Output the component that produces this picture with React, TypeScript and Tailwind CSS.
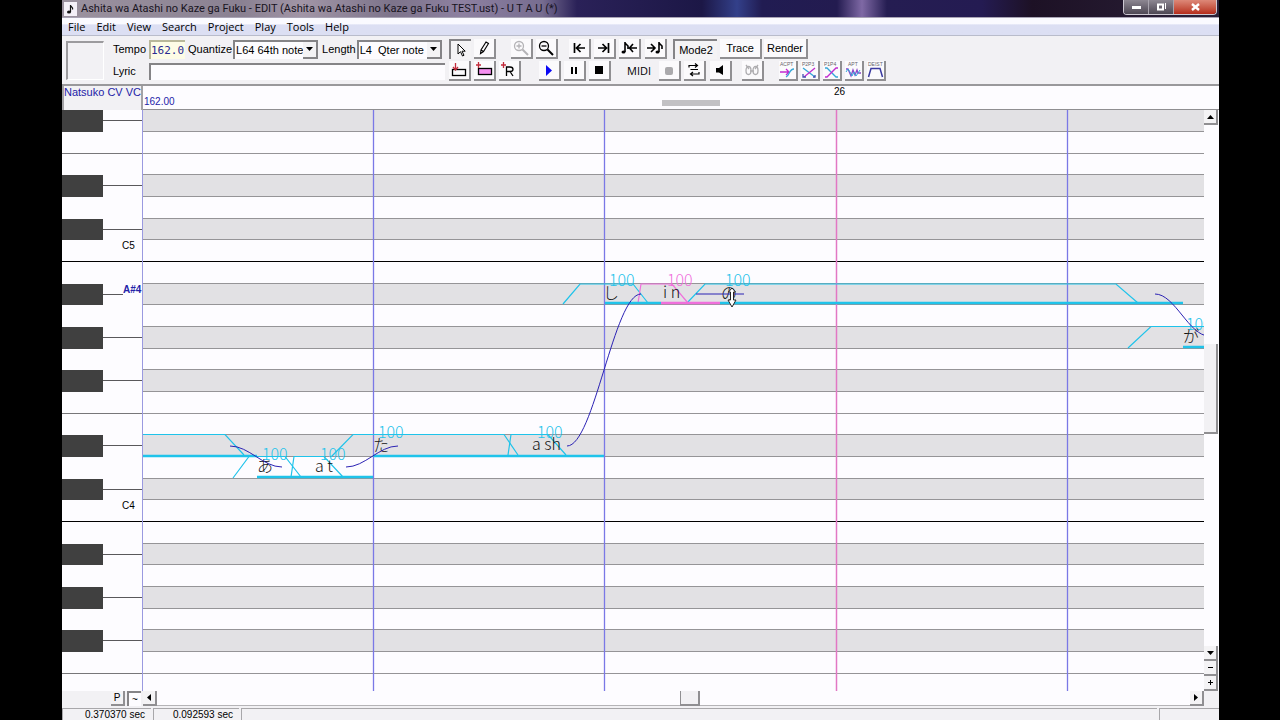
import React from 'react';

const LANES = Array.from({ length: 27 }, (_, i) => i);
const BLACK_KEYS = [0, 3, 5, 8, 10, 12, 15, 17, 20, 22, 24];
const FULL_KEY_LINES = [1, 6, 13, 18, 25];
const OCTAVE_LINES = [6, 18];
const KEY_LABELS: Record<number, string> = { 6: 'C5', 8: 'A#4', 18: 'C4' };

const CYAN = '#1fc3ea';
const PINK = '#f06fdc';

// lanes average 21 2/3 px, so every third one is a pixel shorter
const laneHeight = (i: number) => (i === 26 ? 'h-[18px]' : i % 3 === 2 ? 'h-[21px]' : 'h-[22px]');

interface ToolButtonProps {
  label: string;
  pressed?: boolean;
  disabled?: boolean;
  width?: string;
  className?: string;
  children: React.ReactNode;
}

const ToolButton: React.FC<ToolButtonProps> = ({ label, pressed, disabled, width = 'w-[22px]', className = '', children }) => (
  <button
    type="button"
    aria-label={label}
    aria-pressed={pressed}
    disabled={disabled}
    className={`flex h-5 shrink-0 items-center justify-center ${width} ${pressed ? 'border-t-2 border-l-2 border-[#858487] bg-[#f4f3f5]' : 'border-r-2 border-b-2 border-[#908f92] bg-[#fbfafc]'} ${className}`}
  >
    {children}
  </button>
);

const Icon: React.FC<{ children: React.ReactNode; color?: string; w?: number }> = ({ children, color = '#000', w = 18 }) => (
  <svg width={w} height="18" viewBox={`0 0 ${w} 18`} fill="none" stroke={color} strokeWidth="1.3" className="shrink-0">
    {children}
  </svg>
);

const Combo: React.FC<{ id: string; label: string; value: string }> = ({ id, label, value }) => (
  <>
    <label htmlFor={id} className="shrink-0">{label}</label>
    <div className="relative mr-1 ml-px h-[19px] w-[85px] shrink-0">
      <select id={id} className="block h-full w-full appearance-none border-t-2 border-l-2 border-[#858487] bg-[#fdfcff] pl-px text-[11px] leading-4">
        <option>{value}</option>
      </select>
      <span className="pointer-events-none absolute top-[2px] right-0 flex h-[17px] w-[15px] items-center justify-center border-r-2 border-b-2 border-[#858487] bg-[#f4f3f5]">
        <svg width="7" height="4"><path d="M0 0H7L3.500 4Z" /></svg>
      </span>
    </div>
  </>
);

const MenuBar = () => (
  <nav className="flex h-[18px] shrink-0 items-center gap-[11px] border-b border-[#b9bccb] bg-linear-to-b from-[#fafaff] from-35% to-[#dcdff3] to-40% pl-[6px] font-['Open_Sans',sans-serif] text-[11px] leading-4">
    {['File', 'Edit', 'View', 'Search', 'Project', 'Play', 'Tools', 'Help'].map((m) => (
      <button key={m} type="button">{m}</button>
    ))}
  </nav>
);

const TitleBar = () => (
  <header className="relative flex h-[18px] shrink-0 items-center overflow-hidden border-b border-[#a9a4b5] bg-[linear-gradient(90deg,#9b929f_0,#8a8192_180px,#a195a6_240px,#7d748b_330px,#8d80a0_400px,#776d90_480px,#2a2158_515px,#1c1746_640px,#33408a_675px,#211c52_700px,#231b50_775px,#7f69a5_800px,#251d52_825px,#241b52_920px,#1d1125_970px,#2a2038_100%)] pl-[2px]">
    <svg width="13" height="14" viewBox="0 0 13 14" className="shrink-0">
      <rect width="13" height="14" fill="#f4f0f8" />
      <path d="M6.5 3V10M6.500 3.500C7 5.500 9.500 5 8.500 7.500" fill="none" stroke="#111" strokeWidth="1.2" />
      <ellipse cx="5" cy="10" rx="2" ry="1.500" fill="#111" />
    </svg>
    <h1 className="ml-1 font-['Roboto',sans-serif] text-[11px] leading-4 whitespace-nowrap text-[#17131d]">
      Ashita wa Atashi no Kaze ga Fuku - EDIT (Ashita wa Atashi no Kaze ga Fuku TEST.ust) - U T A U (*)
    </h1>
    <div className="absolute top-0 right-[2px] flex h-[15px] overflow-hidden rounded-b border border-t-0 border-[#cdc8d2]">
      <button type="button" aria-label="Minimize" className="flex w-[25px] items-center justify-center border-r border-[#a8a3ad] bg-linear-to-b from-[#8d8792] to-[#4e4854]">
        <svg width="9" height="3"><rect width="9" height="3" fill="#fff" /></svg>
      </button>
      <button type="button" aria-label="Restore" className="flex w-[25px] items-center justify-center border-r border-[#a8a3ad] bg-linear-to-b from-[#8d8792] to-[#4e4854]">
        <svg width="9" height="8" fill="none" stroke="#fff"><path d="M1 1.500H6V6.500H1Z" strokeWidth="2" /><path d="M8.500 0V6" /></svg>
      </button>
      <button type="button" aria-label="Close" className="flex w-[42px] items-center justify-center bg-linear-to-b from-[#dd8878] to-[#b52a19]">
        <svg width="9" height="8" stroke="#fff" strokeWidth="2.400"><path d="M1 1L8 7M8 1L1 7" /></svg>
      </button>
    </div>
  </header>
);

const Toolbar = () => (
  <div className="flex h-12 shrink-0 bg-[#f2f1f4] pl-1">
    <div className="mt-[5px] h-[39px] w-[38px] shrink-0 border-t-2 border-l-2 border-[#9c9b9e] border-r border-r-white border-b border-b-white" />

    <div className="mt-[3px] ml-[9px] flex w-[332px] shrink-0 flex-col gap-[2px]">
      <div className="flex h-5 items-center">
        <label htmlFor="tempo" className="w-9 shrink-0">Tempo</label>
        <input id="tempo" defaultValue="162.0" className="mr-[3px] h-[19px] w-9 shrink-0 border-t-2 border-l-2 border-[#b8b79a] bg-[#fdfce6] font-['DejaVu_Sans_Mono',monospace] text-[11px] text-[#2b2b90]" />
        <Combo id="quantize" label="Quantize" value="L64 64th note" />
        <Combo id="length" label="Length" value={'L4\u00a0\u00a0Qter note'} />
      </div>
      <div className="flex h-5 items-center">
        <label htmlFor="lyric" className="w-9 shrink-0">Lyric</label>
        <input id="lyric" className="h-[17px] min-w-0 flex-1 border-t-2 border-l-2 border-[#858487] bg-[#fdfcff]" />
      </div>
    </div>

    <div className="mt-[3px] ml-1 flex flex-col gap-[2px]">
      <div className="flex items-center gap-[3px]">
        <ToolButton label="Select" pressed>
          <Icon><path d="M6 3V13L8.500 10.700L10.500 15L12 14.300L10 10.200H13.200Z" strokeWidth="1" fill="#fff" /></Icon>
        </ToolButton>
        <ToolButton label="Pencil">
          <Icon><path d="M5.500 14.500L6 11L11 3L13.500 4.500L8.500 12.500ZM6 11L8.500 12.500" strokeWidth="1.100" /></Icon>
        </ToolButton>
        <ToolButton label="Zoom in" disabled className="ml-3">
          <Icon color="#b4b3b6"><circle cx="7" cy="7" r="4.500" /><path d="M4.500 7H9.500M7 4.500V9.500" /><path d="M10.500 10.500L16 16" strokeWidth="2" /></Icon>
        </ToolButton>
        <ToolButton label="Zoom out">
          <Icon><circle cx="7" cy="7" r="4.500" /><path d="M4.500 7H9.500" /><path d="M10.500 10.500L16 16" strokeWidth="2" /></Icon>
        </ToolButton>
        <ToolButton label="Go to start" className="ml-2">
          <Icon><path d="M4.500 4V14M15 9H7M10.500 5L6.500 9L10.500 13" strokeWidth="1.700" /></Icon>
        </ToolButton>
        <ToolButton label="Go to end">
          <Icon><path d="M13.500 4V14M3 9H11M7.500 5L11.500 9L7.500 13" strokeWidth="1.700" /></Icon>
        </ToolButton>
        <ToolButton label="Previous note">
          <Icon><path d="M5 3V13M5 4L8 7V10M17 9H10M13 5L9.500 9L13 13" strokeWidth="1.600" /><ellipse cx="3.500" cy="13" rx="2" ry="1.500" fill="#000" stroke="none" /></Icon>
        </ToolButton>
        <ToolButton label="Next note" className="ml-px">
          <Icon><path d="M13 3V13M13 4L16 7V10M1 9H8M5 5L9 9L5 13" strokeWidth="1.600" /><ellipse cx="11.500" cy="13" rx="2" ry="1.500" fill="#000" stroke="none" /></Icon>
        </ToolButton>
        <ToolButton label="Mode2" pressed width="w-[44px]" className="ml-[3px]">Mode2</ToolButton>
        <ToolButton label="Trace" width="w-[42px]">Trace</ToolButton>
        <ToolButton label="Render" width="w-[44px]" className="-ml-px">Render</ToolButton>
      </div>

      <div className="flex items-center gap-[3px]">
        <ToolButton label="Insert note">
          <Icon><rect x="2.500" y="8.500" width="13" height="6" /><path d="M5.500 2V9M3 6L5.500 9L8 6" stroke="#c22b3b" /></Icon>
        </ToolButton>
        <ToolButton label="Add note">
          <Icon><rect x="3.500" y="7.500" width="13" height="6" fill="#f58ff0" /><path d="M3.500 1V7M1 4H6" stroke="#c22b3b" /></Icon>
        </ToolButton>
        <ToolButton label="Add rest">
          <Icon><path d="M3.500 1V7M1 4H6" stroke="#c22b3b" /><path d="M6.500 15V6H10C14 6 14 10.500 10 10.500H6.500M10 10.500L13 15" /></Icon>
        </ToolButton>
        <ToolButton label="Play" className="ml-[15px]">
          <Icon><path d="M6 4L12 9.500L6 15Z" fill="#0a08f5" stroke="none" /></Icon>
        </ToolButton>
        <ToolButton label="Pause">
          <Icon><path d="M7 6V13M11 6V13" strokeWidth="2" /></Icon>
        </ToolButton>
        <ToolButton label="Stop">
          <Icon><rect x="5" y="5" width="8" height="8" fill="#000" stroke="none" /></Icon>
        </ToolButton>
        <span className="w-[42px] pl-2 text-center font-['Open_Sans',sans-serif]">MIDI</span>
        <ToolButton label="Record" disabled>
          <Icon><rect x="5" y="6" width="8" height="8" rx="2" fill="#aaa9ac" stroke="none" /></Icon>
        </ToolButton>
        <ToolButton label="Loop">
          <Icon><path d="M4 6.500V4.500H12M10 2.500L12.500 4.500L10 6.500M5.500 8.500H13M14 11V13H6M8 11L5.500 13L8 15" strokeWidth="1.200" /></Icon>
        </ToolButton>
        <ToolButton label="Sound" className="ml-px">
          <Icon><path d="M5 7H8L12 4V14L8 11.500H5Z" fill="#000" stroke="none" /></Icon>
        </ToolButton>
        <ToolButton label="Link" disabled className="ml-[7px]">
          <Icon color="#aeadb0"><ellipse cx="5.500" cy="9.500" rx="2.500" ry="4" /><ellipse cx="12.500" cy="9.500" rx="2.500" ry="4" /><path d="M3 4L6 8M15 4L12 8M7 10H11" /></Icon>
        </ToolButton>
        <ToolButton label="ACPT" width="w-[19px]" className="ml-3">
          <Icon w={17}><text x="1" y="5" fontSize="5" fill="#66656b" stroke="none">ACPT</text><path d="M1 11H10M7 8L10 11L7 14" stroke="#c12bd0" /><path d="M7 16C11 14 10 8 15 8" stroke="#35a6d8" /></Icon>
        </ToolButton>
        <ToolButton label="P2P3" width="w-[19px]">
          <Icon w={17}><text x="1" y="5" fontSize="5" fill="#66656b" stroke="none">P2P3</text><path d="M2 7L14 16" stroke="#35a6d8" /><path d="M14 7L3 16" stroke="#c12bd0" /><path d="M2 13V16H5M12 16H14V14" stroke="#4450b0" /></Icon>
        </ToolButton>
        <ToolButton label="P1P4" width="w-[19px]">
          <Icon w={17}><text x="1" y="5" fontSize="5" fill="#66656b" stroke="none">P1P4</text><path d="M2 7H4L13 16H15" stroke="#35a6d8" /><path d="M15 7H13L4 16H2" stroke="#c12bd0" /></Icon>
        </ToolButton>
        <ToolButton label="APT" width="w-[19px]">
          <Icon w={17}><text x="3" y="5" fontSize="5" fill="#66656b" stroke="none">APT</text><path d="M1 8H3L6 15L8 9L10 14L12 9L13 12H16" stroke="#8a46c8" /><path d="M1 11L3 8L5 11L7 15L9 11L11 15L15 9" stroke="#35a6d8" strokeWidth="1" /></Icon>
        </ToolButton>
        <ToolButton label="Region" width="w-[19px]">
          <Icon w={17}><text x="1" y="5" fontSize="5" fill="#66656b" stroke="none">DEIST</text><path d="M1.500 16L4 7.500H13L15.500 16" stroke="#3a3aa0" strokeWidth="1.500" /></Icon>
        </ToolButton>
      </div>
    </div>
  </div>
);

const Ruler = () => (
  <div className="flex h-[26px] shrink-0 border-t-2 border-[#99989b] bg-[#fdfcff]">
    <div className="w-[81px] shrink-0 overflow-hidden border-r-2 border-l-2 border-[#a3a2a5] bg-[#f2f1f4] text-[11px] leading-3 whitespace-nowrap text-[#2423a8]">Natsuko CV VC</div>
    <div className="relative flex-1 border-b border-[#8f8e91] leading-3">
      <span className="absolute bottom-px left-px text-[10px] text-[#2423a8]">162.00</span>
      <span className="absolute top-0 left-[691px] text-[10px]">26</span>
      <span className="absolute top-[14px] left-[519px] h-[6px] w-[58px] bg-[#c2c1c4]" />
    </div>
  </div>
);

const Keyboard = () => (
  <div className="w-20 shrink-0 bg-[#fdfcff]">
    {LANES.map((i) => (
      <div key={i} className={`flex ${laneHeight(i)} ${FULL_KEY_LINES.includes(i) ? (OCTAVE_LINES.includes(i) ? 'border-b border-black' : 'border-b border-[#777679]') : ''}`}>
        {BLACK_KEYS.includes(i) && (
          <>
            <div className="w-[41px] bg-[#404040]" />
            <div className={`h-[11px] border-b border-[#59585b] ${KEY_LABELS[i] ? 'w-5' : 'flex-1'}`} />
          </>
        )}
        {KEY_LABELS[i] && (
          <span className={`text-[10px] leading-3 ${i === 8 ? 'font-bold text-[#2423a8]' : 'ml-auto w-5'}`}>{KEY_LABELS[i]}</span>
        )}
      </div>
    ))}
  </div>
);

const BEATS = [230, 461, 924];

const BARS = [
  { x1: 0, x2: 114, y: 346, color: CYAN },
  { x1: 114, x2: 230, y: 367, color: CYAN },
  { x1: 230, x2: 461, y: 346, color: CYAN },
  { x1: 462, x2: 518, y: 193, color: CYAN },
  { x1: 518, x2: 577, y: 193, color: PINK },
  { x1: 577, x2: 1040, y: 193, color: CYAN },
  { x1: 1040, x2: 1600, y: 237, color: CYAN },
];

const ENVELOPES = [
  { d: 'M0 324.500H82L101 345', color: CYAN },
  { d: 'M90 368L106 346.500H142L158 367', color: CYAN },
  { d: 'M148 367L151 346.500H181L200 367', color: CYAN },
  { d: 'M188 347L210 324.500H361L375 345', color: CYAN },
  { d: 'M365 345L368 324.500H405L423 345', color: CYAN },
  { d: 'M420 194L437 174H490L505 193', color: CYAN },
  { d: 'M544 193L562 174H973L995 193', color: CYAN },
  { d: 'M495 193L498 174H529L545 193', color: PINK },
  { d: 'M985 238L1008 216.500H1600', color: CYAN },
];

const PITCHES = [
  'M87 336C106 336 120 357 139 357',
  'M203 357C222 357 236 336 255 336',
  'M424 336C451 336 471 184 498 184',
  'M553 184H601',
  'M1012 184C1032 184 1046 226 1066 226',
];

const INTENSITIES = [
  { x: 119, y: 350 }, { x: 177, y: 350 }, { x: 235, y: 328 }, { x: 394, y: 328 },
  { x: 466, y: 176 }, { x: 524, y: 176, color: PINK }, { x: 582, y: 176 }, { x: 1043, y: 220 },
];

const LYRICS = [
  { x: 114, y: 362, text: 'あ' }, { x: 172, y: 362, text: 'a t' }, { x: 230, y: 341, text: 'た' }, { x: 389, y: 340, text: 'a sh' },
  { x: 460, y: 189, text: 'し' }, { x: 520, y: 188, text: 'i n' }, { x: 578, y: 189, text: 'の' }, { x: 1040, y: 232, text: 'が' },
];

const PianoRoll = () => (
  <div className="relative min-w-0 flex-1 overflow-hidden border-l border-[#9a99e0]">
    {LANES.map((i) => (
      <div key={i} className={`${laneHeight(i)} ${BLACK_KEYS.includes(i) ? 'bg-[#e2e1e4]' : 'bg-[#fdfcff]'} ${i === 26 ? '' : OCTAVE_LINES.includes(i) ? 'border-b border-black' : 'border-b border-[#959497]'}`} />
    ))}
    <svg className="absolute inset-0 h-full w-full" fill="none">
      {BEATS.map((x) => <path key={x} d={`M${x + 0.5} 0V600`} stroke="#7a78e6" strokeWidth="1.300" />)}
      <path d="M693.500 0V600" stroke="#e277c4" strokeWidth="1.500" />
      {ENVELOPES.map((e) => <path key={e.d} d={e.d} stroke={e.color} strokeWidth="1.200" />)}
      {BARS.map((b) => <path key={b.x1} d={`M${b.x1} ${b.y}H${b.x2}`} stroke={b.color} strokeWidth="2.500" />)}
      {INTENSITIES.map((n) => (
        <text key={n.x} x={n.x} y={n.y} fill={n.color ?? CYAN} className="font-['Noto_Sans_CJK_JP',sans-serif] text-[16px] font-light">100</text>
      ))}
      {LYRICS.map((l) => (
        <text key={l.x} x={l.x} y={l.y} fill="#111" className="font-['Noto_Sans_CJK_JP',sans-serif] text-[16px] font-light">{l.text}</text>
      ))}
      {PITCHES.map((d) => <path key={d} d={d} stroke="#2b22b4" />)}
      {/* vertical resize cursor */}
      <path d="M589 178L592.500 182H590.500V190H593L589 197L585 190H587.500V182H585.500Z" fill="#fff" stroke="#222" />
    </svg>
  </div>
);

const ScrollButton: React.FC<{ label: string; className?: string; children: React.ReactNode }> = ({ label, className = '', children }) => (
  <button type="button" aria-label={label} className={`flex h-[15px] w-[14px] shrink-0 items-center justify-center border-r-2 border-b-2 border-[#908f92] bg-[#f4f3f5] text-[10px] leading-3 ${className}`}>
    {children}
  </button>
);

const VerticalScroll = () => (
  <div className="flex w-[15px] shrink-0 flex-col bg-[#fdfcff]">
    <ScrollButton label="Scroll up"><svg width="7" height="4"><path d="M0 4H7L3.500 0Z" /></svg></ScrollButton>
    <div className="h-[219px]" />
    <div className="h-[90px] w-[14px] border-r-2 border-b-2 border-[#908f92] bg-[#f2f1f4]" />
    <div className="flex-1" />
    <ScrollButton label="Scroll down"><svg width="7" height="4"><path d="M0 0H7L3.500 4Z" /></svg></ScrollButton>
    <ScrollButton label="Zoom vertical out"><svg width="5" height="5"><path d="M0 2.500H5" stroke="#000" /></svg></ScrollButton>
    <ScrollButton label="Zoom vertical in"><svg width="5" height="5"><path d="M0 2.500H5M2.500 0V5" stroke="#000" /></svg></ScrollButton>
  </div>
);

const HorizontalScroll = () => (
  <div className="flex h-4 shrink-0 bg-[#f2f1f4]">
    <div className="flex w-[81px] justify-end gap-[2px] pr-[2px]">
      <ScrollButton label="P">P</ScrollButton>
      <button type="button" aria-label="Pitch curve" className="h-[15px] w-[14px] border-t-2 border-l-2 border-[#858487] bg-[#fdfcff] text-[10px] leading-3">~</button>
    </div>
    <div className="flex h-[15px] flex-1 border-b border-[#b5b4b7] bg-[#fdfcff]">
      <ScrollButton label="Scroll left"><svg width="4" height="7"><path d="M4 0V7L0 3.500Z" /></svg></ScrollButton>
      <div className="flex-1" />
      <div className="h-[15px] w-[20px] border-r-2 border-b-2 border-l border-[#908f92] bg-[#f2f1f4]" />
      <div className="w-[490px]" />
      <ScrollButton label="Scroll right"><svg width="4" height="7"><path d="M0 0V7L4 3.500Z" /></svg></ScrollButton>
    </div>
    <div className="w-[15px]" />
  </div>
);

const StatusBar = () => (
  <footer className="flex h-[13px] shrink-0 gap-[2px] overflow-hidden bg-[#f2f1f4] text-[10px] leading-3 whitespace-nowrap">
    <div className="mt-px w-[89px] border-t border-l border-[#a8a7aa] pr-[6px] text-right">0.370370 sec</div>
    <div className="mt-px w-[86px] border-t border-l border-[#a8a7aa] pr-[6px] text-right">0.092593 sec</div>
    <div className="mt-px flex-1 border-t border-l border-[#a8a7aa]" />
    <div className="mt-px w-[60px] border-t border-l border-[#a8a7aa]" />
  </footer>
);

export default function App() {
  return (
    <div className="h-screen bg-black px-[61px] font-['Liberation_Sans',sans-serif] text-[11px] leading-4 text-black">
      <main className="ml-px flex h-full flex-col overflow-hidden bg-[#f2f1f4]">
        <TitleBar />
        <MenuBar />
        <Toolbar />
        <Ruler />
        <div className="flex min-h-0 flex-1 overflow-hidden">
          <Keyboard />
          <PianoRoll />
          <VerticalScroll />
        </div>
        <HorizontalScroll />
        <StatusBar />
      </main>
    </div>
  );
}
